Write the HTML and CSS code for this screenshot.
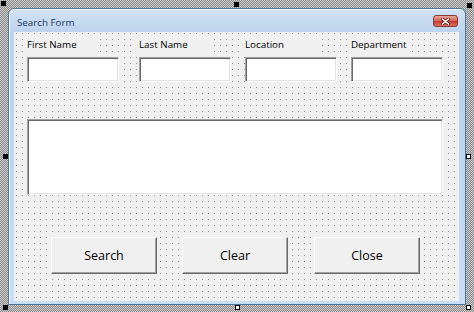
FILE: index.html
```html
<!DOCTYPE html>
<html>
<head>
<meta charset="utf-8">
<link rel="stylesheet" href="styles.css">
</head>
<body>
<div class="canvas">
  <div class="window">
    <div class="titlebar">
      <span class="title">Search Form</span>
      <span class="close"><svg width="9" height="7" viewBox="0 0 9 7"><path d="M1.5 1 L7.5 6 M7.5 1 L1.5 6" stroke="#5a1a14" stroke-width="3" stroke-linecap="round"/><path d="M1.5 1 L7.5 6 M7.5 1 L1.5 6" stroke="#fff" stroke-width="1.6" stroke-linecap="round"/></svg></span>
    </div>
    <div class="client">
      <div class="fields">
        <div class="field first">
          <div class="label w-first">First Name</div>
          <div class="textbox"></div>
        </div>
        <div class="field">
          <div class="label w-last">Last Name</div>
          <div class="textbox"></div>
        </div>
        <div class="field">
          <div class="label w-loc">Location</div>
          <div class="textbox"></div>
        </div>
        <div class="field">
          <div class="label w-dept">Department</div>
          <div class="textbox"></div>
        </div>
      </div>
      <div class="listbox"></div>
      <div class="buttons">
        <div class="btn">Search</div>
        <div class="btn">Clear</div>
        <div class="btn btn-close">Close</div>
      </div>
    </div>
  </div>
  <span class="handle h-tl"></span>
  <span class="handle h-tm"></span>
  <span class="handle h-tr"></span>
  <span class="handle h-lm"></span>
  <span class="handle open h-rm"></span>
  <span class="handle h-bl"></span>
  <span class="handle open h-bm"></span>
  <span class="handle open h-br"></span>
</div>
</body>
</html>
```
FILE: styles.css
```css
body {
  margin: 0;
}

.canvas {
  position: relative;
  width: 474px;
  height: 312px;
  box-sizing: border-box;
  padding: 8px 8px 7px 8px;
  background: repeating-conic-gradient(#858585 0 25%, #d2d2d2 0 50%) 0 0 / 2px 2px;
  font-family: "Open Sans", "Noto Sans", sans-serif;
  color: #000;
}

.window {
  height: 100%;
  box-sizing: border-box;
  border: 1px solid #4f7796;
  border-radius: 6px 6px 0 0;
  background: linear-gradient(#d3e3f5, #bcd3ee 24px, #bfd6f0 50%, #c8def5);
  box-shadow: inset 1px 1px 0 rgba(255, 255, 255, 0.7);
  display: flex;
  flex-direction: column;
  padding: 0 6px 3px 5px;
}

.titlebar {
  height: 23px;
  box-sizing: border-box;
  display: flex;
  justify-content: space-between;
  align-items: flex-start;
  padding: 6px 1px 0 3px;
}

.title {
  font-size: 9.8px;
  line-height: 12px;
  margin-top: 2px;
  color: #1e395b;
}

.close {
  width: 25px;
  height: 12px;
  box-sizing: border-box;
  border: 1px solid #8a3b31;
  border-radius: 3px;
  background: linear-gradient(#eaa89c, #d46a5b 45%, #c23e2f 55%, #d8705f);
  display: flex;
  align-items: center;
  justify-content: center;
}

.close svg {
  display: block;
}

.client {
  flex: 1;
  background-color: #8e8e8e;
  background-image:
    linear-gradient(to right, transparent 1px, #f0f0f0 1px),
    linear-gradient(to bottom, transparent 1px, #f0f0f0 1px);
  background-size: 6px 6px;
  background-position: 2px 1px;
  padding: 5px 0 0 13px;
}

.fields {
  display: flex;
  gap: 14px;
}

.field {
  width: 92px;
  display: flex;
  flex-direction: column;
}

.field.first {
  margin-right: 6px;
}

.label {
  align-self: flex-start;
  box-sizing: border-box;
  height: 16px;
  line-height: 16px;
  font-size: 9.8px;
  background: #f0f0f0;
  margin-left: -4px;
  padding-left: 4px;
  white-space: nowrap;
}

.w-first { width: 76px; }
.w-last { width: 75px; }
.w-loc { width: 76px; }
.w-dept { width: 63px; }

.textbox,
.listbox {
  box-sizing: border-box;
  background: #fff;
  border: 1px solid;
  border-color: #a0a0a0 #fff #fff #a0a0a0;
  box-shadow: inset 1px 1px 0 #696969, inset -1px -1px 0 #e3e3e3;
}

.textbox {
  height: 25px;
  margin-top: 4px;
}

.listbox {
  width: 416px;
  height: 76px;
  margin-top: 37px;
}

.buttons {
  display: flex;
  gap: 25px;
  margin: 42px 0 0 24px;
}

.btn {
  width: 106px;
  height: 37px;
  box-sizing: border-box;
  background: #f0f0f0;
  border: 1px solid;
  border-color: #fff #696969 #696969 #fff;
  box-shadow: inset -1px -1px 0 #a0a0a0;
  display: flex;
  align-items: center;
  justify-content: center;
  font-size: 12.5px;
}

.btn-close {
  margin-left: 1px;
}

.handle {
  position: absolute;
  width: 5px;
  height: 5px;
  box-sizing: border-box;
  background: #000;
  border: 1px solid #000;
}

.handle.open {
  background: #fff;
}

.h-tl { left: 1px; top: 1px; }
.h-tm { left: 234px; top: 2px; }
.h-tr { left: 467px; top: 3px; }
.h-lm { left: 3px; top: 154px; }
.h-rm { left: 466px; top: 154px; }
.h-bl { left: 3px; top: 305px; }
.h-bm { left: 235px; top: 305px; }
.h-br { left: 466px; top: 305px; }
```
